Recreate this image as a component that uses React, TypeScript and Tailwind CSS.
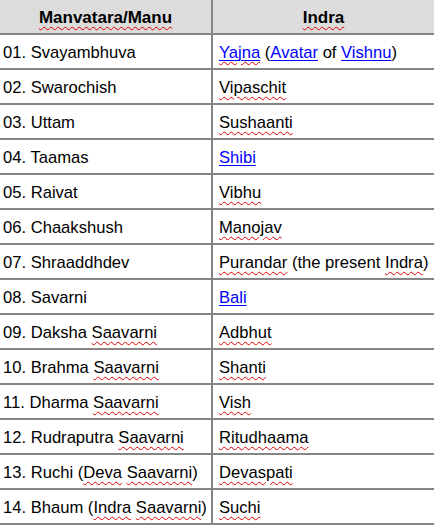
import React from "react";

const W = ({ children }: { children: React.ReactNode }) => (
  <span className="underline decoration-wavy decoration-[#e00000] decoration-[1px] underline-offset-[3px]">
    {children}
  </span>
);

const L = ({ children, wavy }: { children: React.ReactNode; wavy?: boolean }) => (
  <span className="text-[#0000ff] underline decoration-[#0000ff] decoration-[1px] underline-offset-[2px]">
    {wavy ? <W>{children}</W> : children}
  </span>
);

const rows: [React.ReactNode, React.ReactNode][] = [
  [
    "01. Svayambhuva",
    <>
      <L wavy>Yajna</L> (<L>Avatar</L> of <L>Vishnu</L>)
    </>,
  ],
  ["02. Swarochish", <W>Vipaschit</W>],
  ["03. Uttam", <W>Sushaanti</W>],
  ["04. Taamas", <L>Shibi</L>],
  ["05. Raivat", <W>Vibhu</W>],
  ["06. Chaakshush", <W>Manojav</W>],
  [
    "07. Shraaddhdev",
    <>
      <W>Purandar</W> (the present <W>Indra</W>)
    </>,
  ],
  ["08. Savarni", <L>Bali</L>],
  [
    <>
      09. Daksha <W>Saavarni</W>
    </>,
    <W>Adbhut</W>,
  ],
  [
    <>
      10. Brahma <W>Saavarni</W>
    </>,
    <W>Shanti</W>,
  ],
  [
    <>
      11. Dharma <W>Saavarni</W>
    </>,
    <W>Vish</W>,
  ],
  [
    <>
      12. Rudraputra <W>Saavarni</W>
    </>,
    <W>Ritudhaama</W>,
  ],
  [
    <>
      13. Ruchi (<W>Deva</W> <W>Saavarni</W>)
    </>,
    <W>Devaspati</W>,
  ],
  [
    <>
      14. Bhaum (<W>Indra</W> <W>Saavarni</W>)
    </>,
    <W>Suchi</W>,
  ],
];

export default function App() {
  return (
    <div
      className="w-[434px] h-[525px] overflow-hidden bg-white text-black text-[16.6px] leading-none"
      style={{ fontFamily: '"Liberation Sans", Arial, sans-serif' }}
    >
      <div className="grid grid-cols-[213px_221px]">
        <div className="h-[35px] flex items-center justify-center font-bold text-[17px] bg-[#dcdcdc] border-b-2 border-r-2 border-[#858585] pt-[2px]">
          <W>Manvatara/Manu</W>
        </div>
        <div className="h-[35px] flex items-center justify-center font-bold text-[17px] bg-[#dcdcdc] border-b-2 border-[#858585] pt-[2px]">
          <W>Indra</W>
        </div>
        {rows.map(([a, b], i) => (
          <React.Fragment key={i}>
            <div className="h-[35px] flex items-center pl-[3px] pt-[3px] whitespace-nowrap border-b-2 border-r-2 border-[#858585]">
              <span>{a}</span>
            </div>
            <div className="h-[35px] flex items-center pl-[6px] pt-[3px] whitespace-nowrap border-b-2 border-[#858585]">
              <span>{b}</span>
            </div>
          </React.Fragment>
        ))}
      </div>
    </div>
  );
}
